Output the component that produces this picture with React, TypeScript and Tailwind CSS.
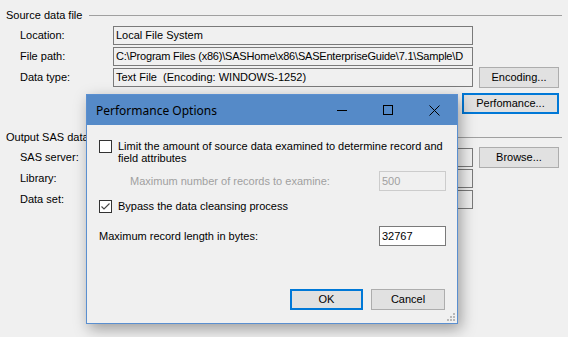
const TextBox = ({ value, className = "" }: { value?: string; className?: string }) => (
  <div
    className={`flex h-[19px] items-center overflow-hidden whitespace-pre border border-[#7a7a7a] bg-[#f0f0f0] pl-[2px] ${className}`}
  >
    {value}
  </div>
);

const Button = ({ label, focused, className = "" }: { label: string; focused?: boolean; className?: string }) => (
  <div
    className={`flex h-[21px] items-center justify-center bg-[#e1e1e1] ${
      focused ? "border-2 border-[#0078d7]" : "border border-[#adadad]"
    } ${className}`}
  >
    {label}
  </div>
);

const GroupHeader = ({ title }: { title: string }) => (
  <div className="flex h-[13px] items-center pl-[6px] pr-[6px]">
    <span>{title}</span>
    <div className="ml-[7px] h-px flex-1 bg-[#a0a0a0]" />
  </div>
);

const Row = ({
  label,
  value,
  boxClass = "",
  children,
}: {
  label: string;
  value?: string;
  boxClass?: string;
  children?: React.ReactNode;
}) => (
  <div className="flex items-center">
    <div className="w-[93px]">{label}</div>
    <TextBox value={value} className={`w-[360px] ${boxClass}`} />
    {children}
  </div>
);

const CheckBox = ({ checked }: { checked?: boolean }) => (
  <div className="h-[13px] w-[13px] shrink-0 border border-[#333333] bg-white">
    {checked && (
      <svg width="11" height="11" viewBox="0 0 11 11">
        <polyline points="1.5,5.5 4,8 9.5,2.5" fill="none" stroke="#444" strokeWidth="1.1" />
      </svg>
    )}
  </div>
);

const PerformanceDialog = () => (
  <div className="absolute left-[86px] top-[94px] flex h-[230px] w-[372px] flex-col border border-[#5a8fd0] bg-[#f0f0f0] shadow-[3px_5px_14px_rgba(0,0,0,0.35)]">
    <div className="flex h-[30px] shrink-0 items-center bg-[#558ac8] pl-[9px]">
      <span className="font-['Noto_Sans',sans-serif] text-[12px] text-black">Performance Options</span>
      <div className="ml-auto flex h-full">
        <div className="flex w-[46px] items-center justify-center">
          <div className="h-px w-[10px] bg-black" />
        </div>
        <div className="flex w-[46px] items-center justify-center">
          <div className="h-[10px] w-[10px] border border-black" />
        </div>
        <div className="flex w-[46px] items-center justify-center">
          <svg width="11" height="11" viewBox="0 0 11 11">
            <path d="M0.5 0.5 L10.5 10.5 M10.5 0.5 L0.5 10.5" stroke="black" strokeWidth="1" />
          </svg>
        </div>
      </div>
    </div>

    <div className="relative flex flex-1 flex-col">
      <div className="mt-[15px] flex items-start gap-[6px] pl-[12px] leading-[12px]">
        <CheckBox />
        <div>
          Limit the amount of source data examined to determine record and
          <br />
          field attributes
        </div>
      </div>

      <div className="mt-[7px] flex items-center justify-between pl-[43px] pr-[11px]">
        <span className="text-[#a0a0a0]">Maximum number of records to examine:</span>
        <div className="flex h-[20px] w-[67px] items-center border border-[#cccccc] bg-[#f0f0f0] pl-[2px] text-[#a0a0a0]">
          500
        </div>
      </div>

      <div className="mt-[9px] flex items-center gap-[6px] pl-[12px]">
        <CheckBox checked />
        <span>Bypass the data cleansing process</span>
      </div>

      <div className="mt-[13px] flex items-center justify-between pl-[12px] pr-[11px]">
        <span>Maximum record length in bytes:</span>
        <div className="flex h-[20px] w-[67px] items-center border border-[#7a7a7a] bg-white pl-[2px]">32767</div>
      </div>

      <div className="mt-[43px] flex justify-end gap-[8px] pr-[12px]">
        <Button label="OK" focused className="w-[73px]" />
        <Button label="Cancel" className="w-[74px]" />
      </div>

      <svg className="absolute bottom-[2px] right-[2px]" width="8" height="8" viewBox="0 0 8 8">
        <rect x="6" y="0" width="2" height="2" fill="#b8b8b8" />
        <rect x="3" y="3" width="2" height="2" fill="#b8b8b8" />
        <rect x="6" y="3" width="2" height="2" fill="#b8b8b8" />
        <rect x="0" y="6" width="2" height="2" fill="#b8b8b8" />
        <rect x="3" y="6" width="2" height="2" fill="#b8b8b8" />
        <rect x="6" y="6" width="2" height="2" fill="#b8b8b8" />
      </svg>
    </div>
  </div>
);

export default function App() {
  return (
    <div className="relative h-[337px] w-[568px] overflow-hidden bg-[#f0f0f0] font-['Liberation_Sans',Arial,sans-serif] text-[11px] leading-[13px] text-black">
      <div className="flex flex-col pt-[9px]">
        <GroupHeader title="Source data file" />
        <div className="mt-[4px] flex flex-col gap-[2px] pl-[20px]">
          <Row label="Location:" value="Local File System" />
          <Row
            label="File path:"
            value="C:\Program Files (x86)\SASHome\x86\SASEnterpriseGuide\7.1\Sample\D"
            boxClass="tracking-[-0.2px]"
          />
          <Row label="Data type:" value="Text File  (Encoding: WINDOWS-1252)">
            <Button label="Encoding..." className="-my-px ml-[6px] w-[80px]" />
          </Row>
        </div>
        <div className="mt-[6px] pl-[462px]">
          <Button label="Perfomance..." focused className="w-[97px]" />
        </div>

        <div className="mt-[17px]">
          <GroupHeader title="Output SAS data" />
        </div>
        <div className="mt-[4px] flex flex-col gap-[2px] pl-[20px]">
          <Row label="SAS server:">
            <Button label="Browse..." className="-my-px ml-[6px] w-[80px]" />
          </Row>
          <Row label="Library:" />
          <Row label="Data set:" />
        </div>
      </div>

      <PerformanceDialog />
    </div>
  );
}
